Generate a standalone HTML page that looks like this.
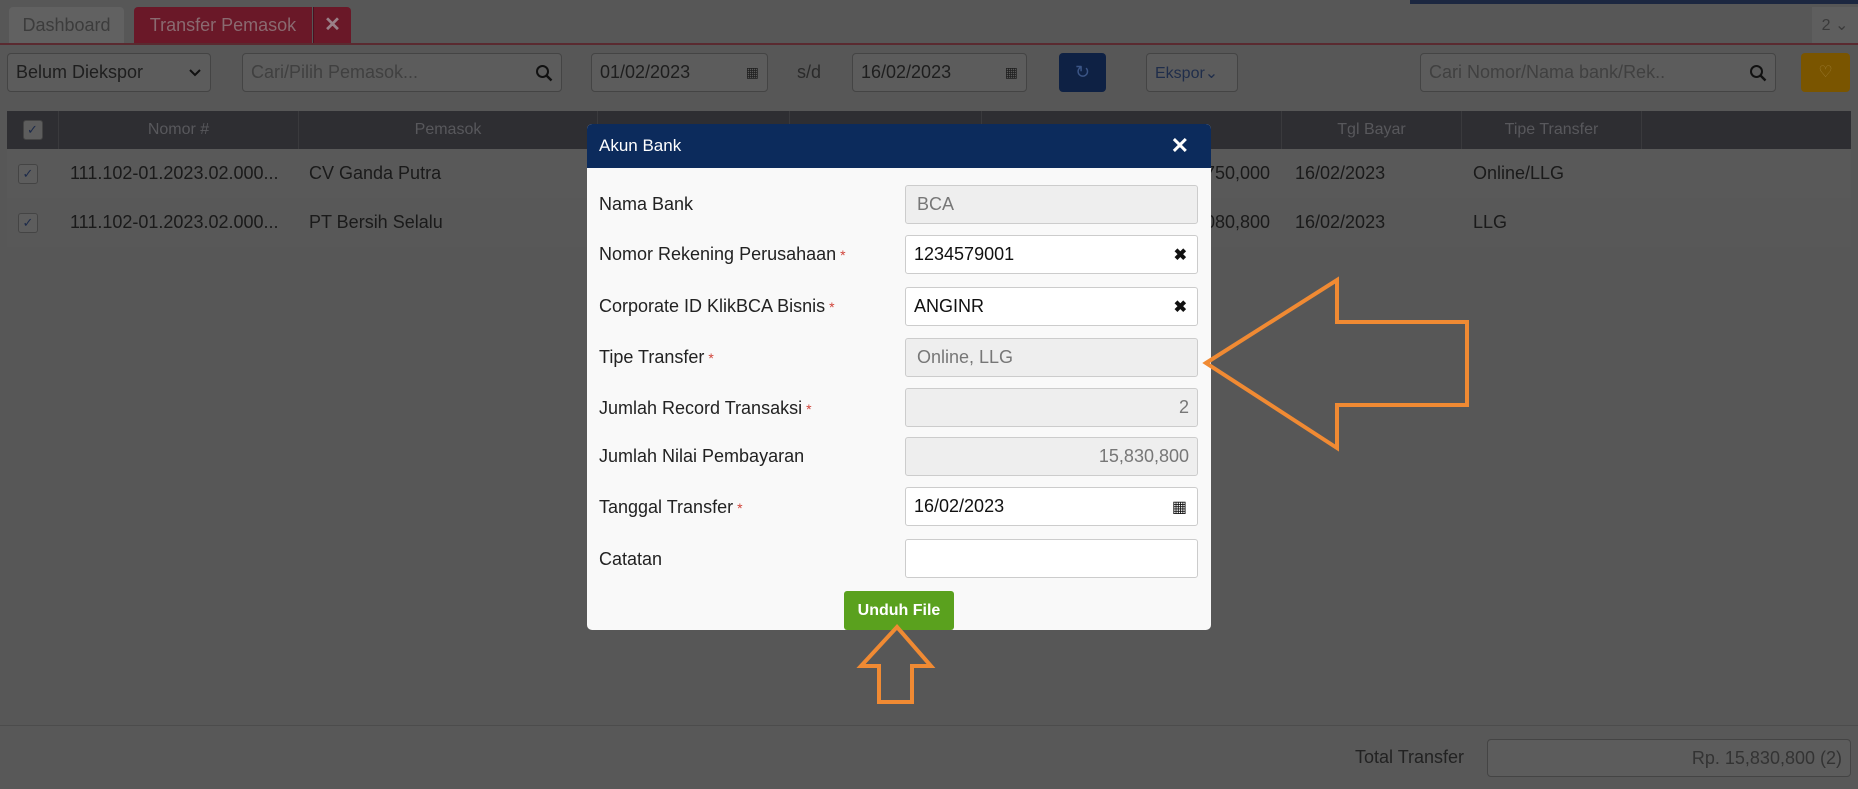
<!DOCTYPE html>
<html><head><meta charset="utf-8"><style>
*{box-sizing:border-box;margin:0;padding:0}
body{width:1858px;height:789px;overflow:hidden;background:#575757;font-family:"Liberation Sans",sans-serif;position:relative}
.a{position:absolute}
.box{position:absolute;border:1px solid #444;border-radius:4px;background:#5c5c5c;color:#1e1e1e;font-size:18px;padding:0 8px;display:flex;align-items:center}
.th{position:absolute;top:111px;height:38px;border-right:1px solid #3a3a3d;color:#58585c;font-size:16px;display:flex;align-items:center;justify-content:center}
.td{position:absolute;font-size:18px;color:#1a1a1a}
.cb{position:absolute;width:20px;height:20px;border:1px solid #444;border-radius:3px;background:#5d5d5d;color:#1c2a4a;font-size:13px;text-align:center;line-height:18px}
.lbl{position:absolute;left:599px;font-size:18px;color:#222}
.lbl i{color:#d0443a;font-style:normal;font-size:14px;margin-left:4px}
.in{position:absolute;left:905px;width:293px;height:39px;border:1px solid #ccc;border-radius:3px;background:#fff;font-size:18px;color:#111;padding:0 8px;display:flex;align-items:center}
.ro{background:#eee;color:#777}
.x{position:absolute;right:10px;font-size:16px;font-weight:bold;color:#111}
</style></head><body>
<div class="a" style="left:1410px;top:0;width:448px;height:4px;background:#1c2740"></div>
<div class="a" style="left:9px;top:7px;width:115px;height:37px;background:#616161;border-radius:4px 4px 0 0;color:#3c3c3c;font-size:18px;line-height:37px;text-align:center">Dashboard</div>
<div class="a" style="left:134px;top:7px;width:178px;height:37px;background:#6a1828;border-radius:4px 0 0 0;color:#8a6a70;font-size:18px;line-height:37px;text-align:center">Transfer Pemasok</div>
<div class="a" style="left:313px;top:7px;width:38px;height:37px;background:#6a1828;border-left:1px solid #4a1020;border-radius:0 4px 0 0;color:#9a8088;font-size:20px;font-weight:bold;line-height:37px;text-align:center">✕</div>
<div class="a" style="left:1812px;top:7px;width:46px;height:37px;background:#5e5e5e;color:#3a3a3a;font-size:16px;line-height:37px;text-align:center">2 ⌄</div>
<div class="a" style="left:0;top:43px;width:1858px;height:2px;background:#5a2a30"></div>

<div class="box" style="left:7px;top:53px;width:204px;height:39px">Belum Diekspor<svg style="margin-left:auto" width="14" height="10"><path d="M2 2l5 5 5-5" stroke="#111" stroke-width="2" fill="none"/></svg></div>
<div class="box" style="left:242px;top:53px;width:320px;height:39px;color:#404040">Cari/Pilih Pemasok...<svg style="margin-left:auto" width="18" height="18"><circle cx="7.5" cy="7.5" r="5.5" stroke="#111" stroke-width="2" fill="none"/><path d="M11.5 11.5l5 5" stroke="#111" stroke-width="2.4"/></svg></div>
<div class="box" style="left:591px;top:53px;width:177px;height:39px">01/02/2023<span style="margin-left:auto;font-size:14px">▦</span></div>
<div class="a" style="left:797px;top:62px;font-size:18px;color:#2a2a2a">s/d</div>
<div class="box" style="left:852px;top:53px;width:175px;height:39px">16/02/2023<span style="margin-left:auto;font-size:14px">▦</span></div>
<div class="a" style="left:1059px;top:53px;width:47px;height:39px;background:#0e2144;border-radius:4px;color:#3b5586;font-size:18px;text-align:center;line-height:39px">↻</div>
<div class="box" style="left:1146px;top:53px;width:92px;height:39px;font-size:16px;color:#1f2d4a">Ekspor⌄</div>
<div class="box" style="left:1420px;top:53px;width:356px;height:39px;color:#404040">Cari Nomor/Nama bank/Rek..<svg style="margin-left:auto" width="18" height="18"><circle cx="7.5" cy="7.5" r="5.5" stroke="#111" stroke-width="2" fill="none"/><path d="M11.5 11.5l5 5" stroke="#111" stroke-width="2.4"/></svg></div>
<div class="a" style="left:1801px;top:53px;width:49px;height:39px;background:#7a5500;border-radius:4px;color:#9a7a30;text-align:center;line-height:39px">♡</div>

<div class="a" style="left:7px;top:111px;width:1844px;height:38px;background:#2e2e32"></div>
<div class="th" style="left:7px;width:52px"><div class="cb" style="position:static;background:#5d5d5d">✓</div></div>
<div class="th" style="left:59px;width:240px">Nomor #</div>
<div class="th" style="left:299px;width:299px">Pemasok</div>
<div class="th" style="left:598px;width:192px"></div>
<div class="th" style="left:790px;width:192px"></div>
<div class="th" style="left:982px;width:300px"></div>
<div class="th" style="left:1282px;width:180px">Tgl Bayar</div>
<div class="th" style="left:1462px;width:180px">Tipe Transfer</div>
<div class="a" style="left:7px;top:149px;width:1844px;height:49px;background:#595959"></div>
<div class="a" style="left:7px;top:198px;width:1844px;height:49px;background:#585858"></div>
<div class="cb" style="left:18px;top:164px">✓</div>
<div class="cb" style="left:18px;top:213px">✓</div>
<div class="td" style="left:70px;top:163px">111.102-01.2023.02.000...</div>
<div class="td" style="left:309px;top:163px">CV Ganda Putra</div>
<div class="td" style="left:1205px;top:163px">750,000</div>
<div class="td" style="left:1295px;top:163px">16/02/2023</div>
<div class="td" style="left:1473px;top:163px">Online/LLG</div>
<div class="td" style="left:70px;top:212px">111.102-01.2023.02.000...</div>
<div class="td" style="left:309px;top:212px">PT Bersih Selalu</div>
<div class="td" style="left:1205px;top:212px">080,800</div>
<div class="td" style="left:1295px;top:212px">16/02/2023</div>
<div class="td" style="left:1473px;top:212px">LLG</div>
<div class="a" style="left:0;top:725px;width:1858px;height:64px;background:#585858;border-top:1px solid #4c4c4c"></div>
<div class="a" style="left:1355px;top:747px;font-size:18px;color:#222">Total Transfer</div>
<div class="box" style="left:1487px;top:739px;width:364px;height:38px;justify-content:flex-end;color:#333">Rp. 15,830,800 (2)</div>

<div class="a" style="left:587px;top:124px;width:624px;height:506px;background:#f9f9f9;border-radius:5px;overflow:hidden">
<div style="height:44px;background:#0c2b5c;color:#fff;font-size:17px;padding-left:12px;line-height:44px">Akun Bank<span style="position:absolute;right:22px;font-size:22px;font-weight:bold">✕</span></div>
</div>
<div class="lbl" style="top:194px">Nama Bank</div>
<div class="lbl" style="top:244px">Nomor Rekening Perusahaan<i>*</i></div>
<div class="lbl" style="top:296px">Corporate ID KlikBCA Bisnis<i>*</i></div>
<div class="lbl" style="top:347px">Tipe Transfer<i>*</i></div>
<div class="lbl" style="top:398px">Jumlah Record Transaksi<i>*</i></div>
<div class="lbl" style="top:446px">Jumlah Nilai Pembayaran</div>
<div class="lbl" style="top:497px">Tanggal Transfer<i>*</i></div>
<div class="lbl" style="top:549px">Catatan</div>
<div class="in ro" style="top:185px;padding-left:11px">BCA</div>
<div class="in" style="top:235px">1234579001<span class="x">✖</span></div>
<div class="in" style="top:287px">ANGINR<span class="x">✖</span></div>
<div class="in ro" style="top:338px;padding-left:11px">Online, LLG</div>
<div class="in ro" style="top:388px;justify-content:flex-end">2</div>
<div class="in ro" style="top:437px;justify-content:flex-end">15,830,800</div>
<div class="in" style="top:487px">16/02/2023<span class="x" style="font-weight:normal;font-size:16px">▦</span></div>
<div class="in" style="top:539px"></div>
<div class="a" style="left:844px;top:591px;width:110px;height:39px;background:#5aa11e;border-radius:3px;color:#fff;font-size:16px;font-weight:bold;text-align:center;line-height:39px">Unduh File</div>

<svg class="a" style="left:0;top:0" width="1858" height="789">
<polygon points="1206,363 1337,280 1337,322 1467,322 1467,405 1337,405 1337,448" fill="none" stroke="#f08a33" stroke-width="4" stroke-linejoin="miter"/>
<polygon points="897,627 931,666 912,666 912,702 879,702 879,666 861,666" fill="none" stroke="#f08a33" stroke-width="4"/>
</svg>
</body></html>
